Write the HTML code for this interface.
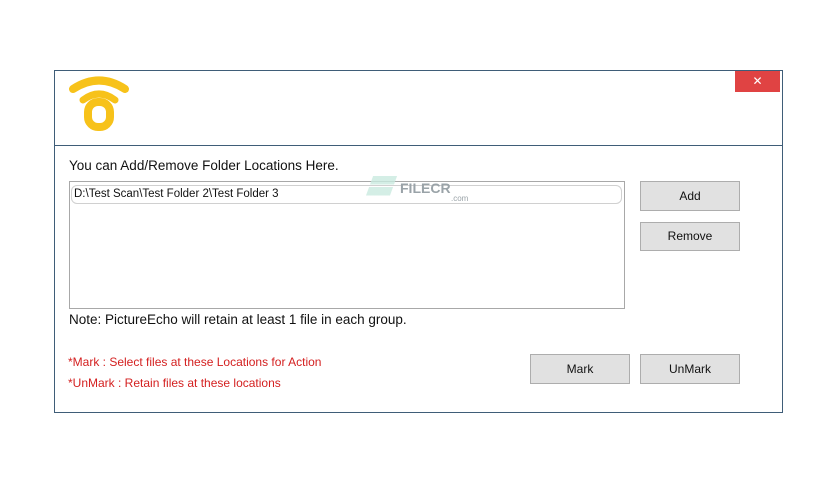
<!DOCTYPE html>
<html><head><style>
body{margin:0;width:836px;height:484px;background:#fff;font-family:"Liberation Sans",sans-serif;position:relative;overflow:hidden}
.a{position:absolute}
.win{left:54px;top:70px;width:727px;height:341px;border:1px solid #3f5d78}
.btn{position:absolute;background:#e1e1e1;border:1px solid #adadad;box-sizing:border-box;font-size:12px;color:#111;text-align:center}
</style></head><body>
<div class="a win"></div>
<div class="a" style="left:55px;top:145px;width:727px;height:1px;background:#3f5d78"></div>
<div class="a" style="left:735px;top:71px;width:45px;height:21px;background:#e04343;color:#fff;font-size:12px;text-align:center;line-height:21px">✕</div>
<svg class="a" style="left:68px;top:74px" width="62" height="60" viewBox="0 0 62 60">
<path d="M5 15 Q31 -2 57 15" stroke="#f7c21a" stroke-width="8" fill="none" stroke-linecap="round"/>
<path d="M15 26 Q31 14 47 26" stroke="#f7c21a" stroke-width="7" fill="none" stroke-linecap="round"/>
<rect x="20" y="28" width="22" height="25" rx="10" stroke="#f7c21a" stroke-width="8" fill="none"/>
</svg>
<div class="a" style="left:69px;top:158px;font-size:13.5px;color:#111">You can Add/Remove Folder Locations Here.</div>
<div class="a" style="left:69px;top:181px;width:554px;height:126px;border:1px solid #a8a8a8"></div>
<div class="a" style="left:71px;top:185px;width:549px;height:17px;border:1px solid #d0d0d0;border-radius:6px"></div>
<div class="a" style="left:74px;top:188px;font-size:11.5px;color:#111">D:\Test Scan\Test Folder 2\Test Folder 3</div>
<div class="a" style="left:400px;top:180px;font-size:14px;font-weight:bold;color:#9aa3a8">FILECR</div>
<div class="a" style="left:451px;top:194px;font-size:8px;color:#9aa3a8">.com</div>
<div class="a" style="left:368px;top:176px;width:24px;height:28px;background:linear-gradient(#c9eadf 0 30%,transparent 30% 40%,#c9eadf 40% 70%,transparent 70%);transform:skewX(-20deg);opacity:.8"></div>
<div class="btn" style="left:640px;top:181px;width:100px;height:30px;line-height:28px">Add</div>
<div class="btn" style="left:640px;top:222px;width:100px;height:29px;line-height:27px">Remove</div>
<div class="a" style="left:69px;top:312px;font-size:13.5px;color:#111">Note: PictureEcho will retain at least 1 file in each group.</div>
<div class="a" style="left:68px;top:355px;font-size:12px;color:#d42020">*Mark : Select files at these Locations for Action</div>
<div class="a" style="left:68px;top:376px;font-size:12px;color:#d42020">*UnMark : Retain files at these locations</div>
<div class="btn" style="left:530px;top:354px;width:100px;height:30px;line-height:28px">Mark</div>
<div class="btn" style="left:640px;top:354px;width:100px;height:30px;line-height:28px">UnMark</div>
</body></html>
